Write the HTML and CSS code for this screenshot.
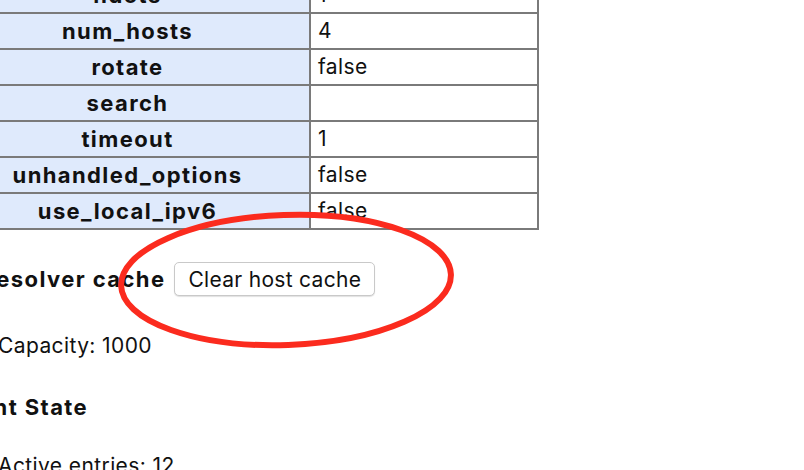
FILE: index.html
```html
<!DOCTYPE html>
<html>
  <head>
    <title>DNS</title>
    <link rel="stylesheet" href="styles.css">
  </head>
  <body>
    <div class="page">
      <table class="config">
        <tr><th>ndots</th><td>1</td></tr>
        <tr><th>num_hosts</th><td>4</td></tr>
        <tr><th>rotate</th><td>false</td></tr>
        <tr><th>search</th><td></td></tr>
        <tr><th>timeout</th><td>1</td></tr>
        <tr><th>unhandled_options</th><td>false</td></tr>
        <tr><th>use_local_ipv6</th><td>false</td></tr>
      </table>

      <div class="cache-head">
        <h4>Host resolver cache</h4>
        <button>Clear host cache</button>
      </div>
      <div class="info capacity">Capacity: 1000</div>

      <h4 class="state">Current State</h4>
      <div class="info active">Active entries: 12</div>
    </div>

    <svg class="mark" width="804" height="470" viewBox="0 0 804 470">
      <ellipse cx="286" cy="280" rx="165" ry="65" transform="rotate(-2 286 280)"
               fill="none" stroke="#fb2b1e" stroke-width="6"/>
    </svg>
  </body>
</html>
```

FILE: styles.css
```css
html, body {
  margin: 0;
  height: 100%;
  overflow: hidden;
  background: #fff;
}
body {
  font-family: Inter, "Liberation Sans", sans-serif;
  font-size: 21px;
  letter-spacing: 0.4px;
  color: #111;
}
.page {
  margin-left: -56px;
}
.config {
  border-collapse: collapse;
  border: 2px solid #7a7a7a;
  margin-top: -24px;
}
.config th,
.config td {
  border: 2px solid #7a7a7a;
  height: 34px;
  line-height: 34px;
  padding: 0;
}
.config th {
  width: 363px;
  background: #dfeafc;
  text-align: center;
  font-weight: bold;
  font-size: 22px;
  letter-spacing: 1.4px;
}
.config td {
  width: 219px;
  padding-left: 7px;
  text-align: left;
}
h4 {
  margin: 0;
  font-size: 22px;
  letter-spacing: 1.4px;
  line-height: 24px;
  font-weight: bold;
}
.cache-head {
  display: flex;
  align-items: center;
  gap: 9px;
  margin-top: 32px;
  margin-left: -20px;
  height: 34px;
}
button {
  font-family: inherit;
  font-size: 21px;
  letter-spacing: 0.3px;
  color: #111;
  background: #fff;
  border: 1px solid #c9c9c9;
  border-radius: 5px;
  box-shadow: 0 1px 1px rgba(0, 0, 0, 0.12);
  height: 34px;
  padding: 0 13px;
}
.info {
  line-height: 24px;
  padding-left: 54px;
}
.capacity {
  margin-top: 38px;
}
.state {
  margin-top: 37px;
  margin-left: -18px;
}
.active {
  margin-top: 35px;
}
.mark {
  position: absolute;
  left: 0;
  top: 0;
  pointer-events: none;
}
```
